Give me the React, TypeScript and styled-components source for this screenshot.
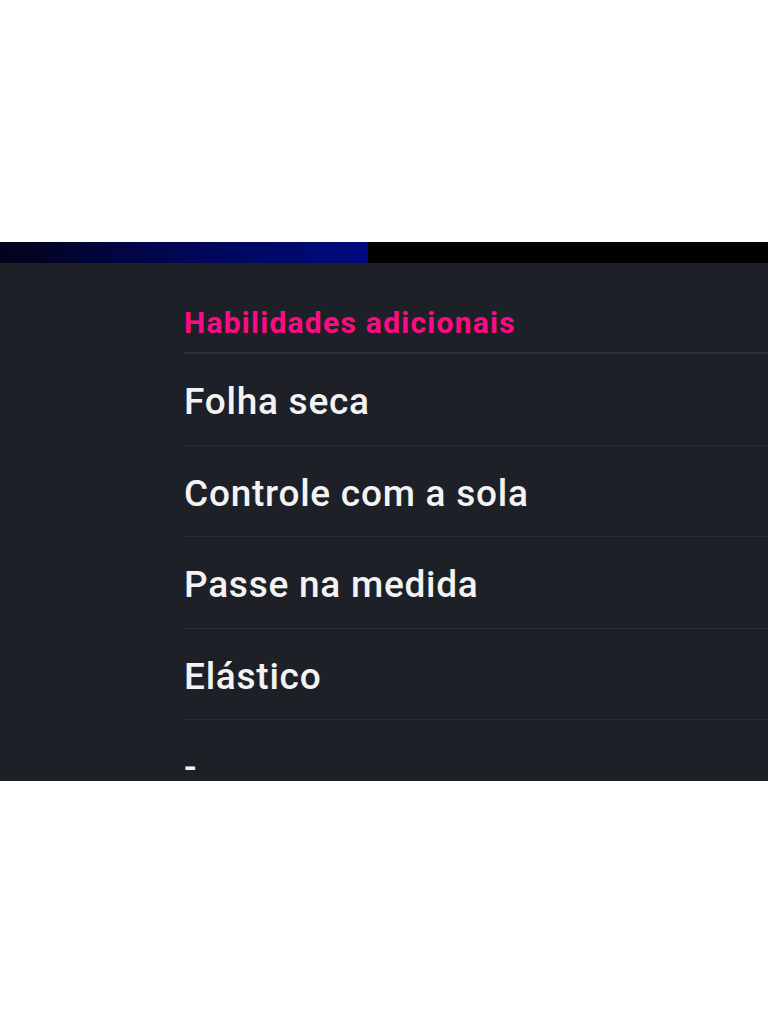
import React from 'react';
import styled, { createGlobalStyle } from 'styled-components';

const GlobalStyle = createGlobalStyle`
  html, body {
    margin: 0;
    padding: 0;
    background: #ffffff;
  }
  * {
    box-sizing: border-box;
  }
`;

const Page = styled.div`
  padding-top: 242px;
  font-family: Roboto, 'Noto Sans', Arial, sans-serif;
`;

const Panel = styled.section`
  height: 539px;
  overflow: hidden;
  background: #1e2028;
`;

const TopBar = styled.div`
  height: 21px;
  background: #000000;
  display: flex;
`;

const Progress = styled.div<{ $width: number }>`
  width: ${(p) => p.$width}px;
  height: 100%;
  background: linear-gradient(90deg, #02031a 0%, #010650 45%, #000a80 100%);
`;

const Content = styled.div`
  padding: 42px 0 0 184px;
`;

const Heading = styled.h2`
  margin: 0;
  padding-bottom: 11px;
  border-bottom: 2px solid #30323a;
  color: #ff0a84;
  font-size: 30px;
  line-height: 36px;
  font-weight: 700;
  letter-spacing: 1.25px;
`;

const List = styled.ul`
  list-style: none;
  margin: 0;
  padding: 0;
`;

const Item = styled.li`
  padding: 26px 0 20.5px;
  border-bottom: 1px solid #2b2d35;
  color: #f3f3f3;
  font-size: 37px;
  line-height: 44px;
  font-weight: 500;
  letter-spacing: 0.75px;
`;

const skills = ['Folha seca', 'Controle com a sola', 'Passe na medida', 'Elástico', '-'];

export default function App() {
  return (
    <>
      <GlobalStyle />
      <Page>
        <Panel>
          <TopBar>
            <Progress $width={368} />
          </TopBar>
          <Content>
            <Heading>Habilidades adicionais</Heading>
            <List>
              {skills.map((s, i) => (
                <Item key={i}>{s}</Item>
              ))}
            </List>
          </Content>
        </Panel>
      </Page>
    </>
  );
}
